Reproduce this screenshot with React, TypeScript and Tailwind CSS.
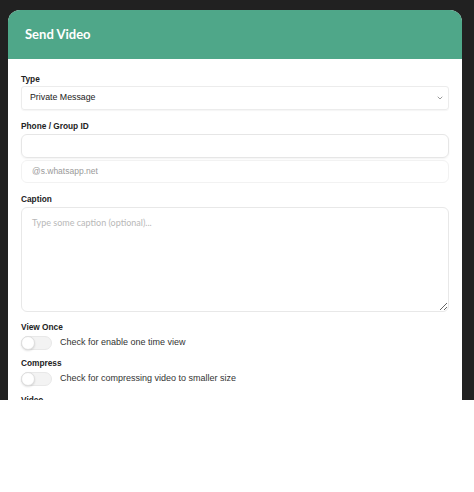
import { ChevronDown } from 'lucide-react'

const sans = "font-['Liberation_Sans',Arial,sans-serif]"

function Label({ children, className = '' }: { children: string; className?: string }) {
  return (
    <div className={`${sans} text-[8.3px] leading-[12px] font-bold text-[#222] ${className}`}>
      {children}
    </div>
  )
}

function Toggle({ text, className = '' }: { text: string; className?: string }) {
  return (
    <div className={`flex items-center h-[14px] ${className}`}>
      <div className="relative w-[31px] h-[14px] rounded-full bg-[#f3f3f3] border border-[#e8e8e8]">
        <div className="absolute left-[-1px] top-[-1px] w-[14px] h-[14px] rounded-full bg-white border border-[#dedede] shadow-[0_1px_2px_rgba(0,0,0,0.12)]" />
      </div>
      <span className={`${sans} ml-[8px] text-[9px] text-[#333]`}>{text}</span>
    </div>
  )
}

export default function App() {
  return (
    <div className="w-[474px] h-[492px] bg-white">
      <div className="h-[400px] bg-[#212121] overflow-hidden pt-[10px] pl-[8px]">
        <div className="w-[454px] rounded-t-[12px] bg-white overflow-hidden">
          {/* header */}
          <div className="h-[49px] bg-[#4fa789] flex items-center px-[17px]">
            <h1 className="font-['Lato',sans-serif] font-bold text-[13px] text-white">Send Video</h1>
          </div>

          {/* body */}
          <div className="px-[13px] pt-[14px] pb-8">
            <Label className="mb-[1px]">Type</Label>
            <div className="h-[24px] rounded-[3px] border border-[#ececec] shadow-[0_1px_1px_rgba(0,0,0,0.04)] flex items-center justify-between pl-[8px] pr-[4px]">
              <span className={`${sans} text-[8.8px] text-[#222]`}>Private Message</span>
              <ChevronDown className="w-[8px] h-[8px] text-[#666]" strokeWidth={2} />
            </div>

            <Label className="mt-[10px] mb-[2px]">Phone / Group ID</Label>
            <div className="h-[24px] rounded-[6px] border border-[#e6e6e6] shadow-[0_1px_2px_rgba(0,0,0,0.05)]" />
            <div className="mt-[2px] h-[23px] rounded-[6px] border border-[#f2f2f2] flex items-center pl-[10px]">
              <span className={`${sans} text-[8.5px] text-[#9a9a9a]`}>@s.whatsapp.net</span>
            </div>

            <Label className="mt-[10px] mb-[2px]">Caption</Label>
            <textarea
              className="block w-full h-[105px] rounded-[6px] border border-[#e8e8e8] px-[10px] py-[8px] font-['Lato',sans-serif] text-[9px] resize-y outline-none placeholder:text-[#b8b8b8]"
              placeholder="Type some caption (optional)..."
            />

            <Label className="mt-[9px] mb-[3px]">View Once</Label>
            <Toggle text="Check for enable one time view" />

            <Label className="mt-[7px] mb-[3px]">Compress</Label>
            <Toggle text="Check for compressing video to smaller size" />

            <Label className="mt-[8px]">Video</Label>
          </div>
        </div>
      </div>
    </div>
  )
}
